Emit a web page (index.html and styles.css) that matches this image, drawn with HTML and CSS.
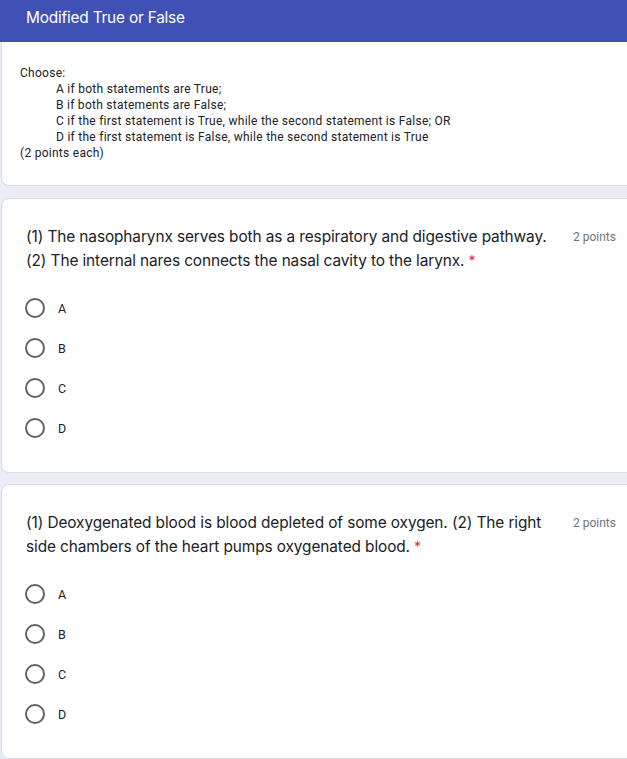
FILE: index.html
```html
<!DOCTYPE html>
<html lang="en">
<head>
<meta charset="utf-8">
<title>Modified True or False</title>
<link rel="stylesheet" href="styles.css">
</head>
<body>
<div class="page">
  <section class="card intro">
    <header class="banner">Modified True or False</header>
    <div class="intro-body">
      <div>Choose:</div>
      <div class="indent">A if both statements are True;</div>
      <div class="indent">B if both statements are False;</div>
      <div class="indent">C if the first statement is True, while the second statement is False; OR</div>
      <div class="indent">D if the first statement is False, while the second statement is True</div>
      <div>(2 points each)</div>
    </div>
  </section>

  <section class="card question">
    <div class="q-head">
      <div class="q-text">(1) The nasopharynx serves both as a respiratory and digestive pathway.<br>(2) The internal nares connects the nasal cavity to the larynx.<span class="req">*</span></div>
      <div class="points">2 points</div>
    </div>
    <div class="options">
      <label class="opt"><span class="radio"></span><span class="opt-label">A</span></label>
      <label class="opt"><span class="radio"></span><span class="opt-label">B</span></label>
      <label class="opt"><span class="radio"></span><span class="opt-label">C</span></label>
      <label class="opt"><span class="radio"></span><span class="opt-label">D</span></label>
    </div>
  </section>

  <section class="card question">
    <div class="q-head">
      <div class="q-text">(1) Deoxygenated blood is blood depleted of some oxygen. (2) The right side chambers of the heart pumps oxygenated blood.<span class="req">*</span></div>
      <div class="points">2 points</div>
    </div>
    <div class="options">
      <label class="opt"><span class="radio"></span><span class="opt-label">A</span></label>
      <label class="opt"><span class="radio"></span><span class="opt-label">B</span></label>
      <label class="opt"><span class="radio"></span><span class="opt-label">C</span></label>
      <label class="opt"><span class="radio"></span><span class="opt-label">D</span></label>
    </div>
  </section>
</div>
</body>
</html>
```
FILE: styles.css
```css
html, body {
  margin: 0;
  padding: 0;
  background: #eaecf7;
  overflow: hidden;
}

.page {
  width: 640px;
  padding-left: 1px;
  display: flex;
  flex-direction: column;
  gap: 12px;
  font-family: Roboto, "Liberation Sans", sans-serif;
  color: #202124;
}

.card {
  background: #fff;
  border: 1px solid #dadce0;
  border-radius: 8px;
}

.card + .card + .card {
  margin-top: -1px;
}

.intro {
  border-top: none;
  border-radius: 0 0 8px 8px;
}

.banner {
  background: #3f51b5;
  color: #fff;
  height: 42px;
  margin-left: -2px;
  padding-left: 26px;
  font-family: Inter, "Open Sans", sans-serif;
  font-size: 15.4px;
  line-height: 35px;
  letter-spacing: -0.2px;
}

.intro-body {
  padding: 23px 18px 24px;
  font-size: 12px;
  line-height: 16px;
  letter-spacing: 0.27px;
}

.indent {
  padding-left: 36px;
}

.question {
  padding: 26px 24px 24px 24px;
}

.q-head {
  display: flex;
  align-items: flex-start;
}

.q-text {
  width: 525px;
  font-family: Inter, "Open Sans", sans-serif;
  font-size: 15.4px;
  line-height: 24px;
  letter-spacing: -0.1px;
}

.req {
  color: #d93025;
  margin-left: 4px;
  font-size: 14px;
  vertical-align: top;
}

.points {
  margin-left: 22px;
  font-size: 12px;
  line-height: 24px;
  color: #70757a;
  white-space: nowrap;
}

.options {
  margin-top: 15px;
  display: flex;
  flex-direction: column;
}

.opt {
  height: 40px;
  display: flex;
  align-items: center;
}

.radio {
  width: 16px;
  height: 16px;
  border: 2px solid #5f6368;
  border-radius: 50%;
  margin-left: -1px;
}

.opt-label {
  margin-left: 13px;
  font-size: 12.5px;
}
```
